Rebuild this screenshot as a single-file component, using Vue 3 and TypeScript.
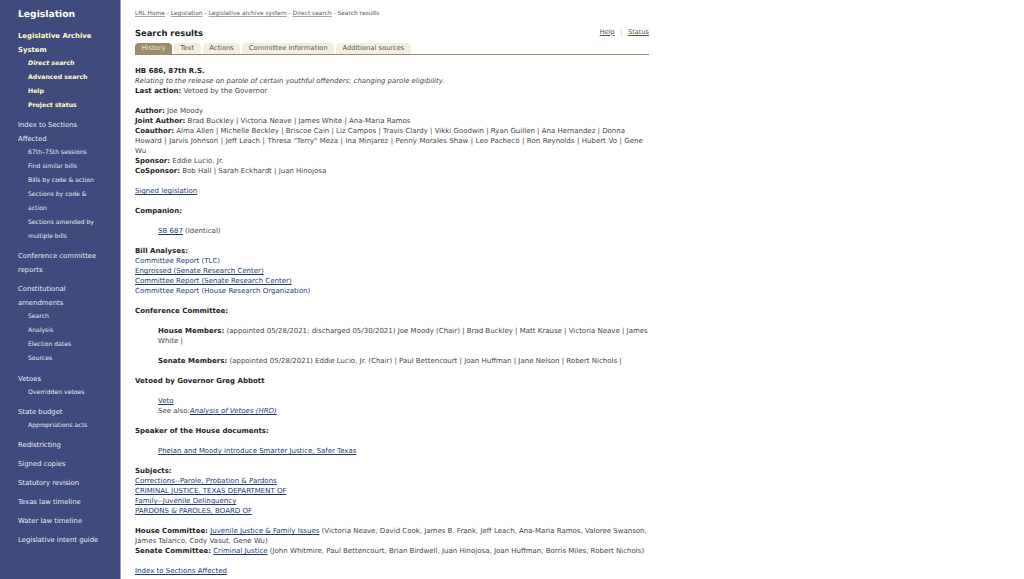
<script setup lang="ts">
interface NavLink { label: string; cls?: string }
interface NavGroup { title: string; items?: NavLink[] }

const groups: NavGroup[] = [
  { title: 'Index to Sections Affected', items: [
    { label: '67th–75th sessions' }, { label: 'Find similar bills' }, { label: 'Bills by code & action' },
    { label: 'Sections by code & action' }, { label: 'Sections amended by multiple bills' } ] },
  { title: 'Conference committee reports' },
  { title: 'Constitutional amendments', items: [
    { label: 'Search' }, { label: 'Analysis' }, { label: 'Election dates' }, { label: 'Sources' } ] },
  { title: 'Vetoes', items: [{ label: 'Overridden vetoes' }] },
  { title: 'State budget', items: [{ label: 'Appropriations acts' }] },
  { title: 'Redistricting' },
  { title: 'Signed copies' },
  { title: 'Statutory revision' },
  { title: 'Texas law timeline' },
  { title: 'Water law timeline' },
  { title: 'Legislative intent guide' },
]
const tabs: string[] = ['History', 'Text', 'Actions', 'Committee information', 'Additional sources']
const analyses: string[] = [
  'Committee Report (TLC)', 'Engrossed (Senate Research Center)',
  'Committee Report (Senate Research Center)', 'Committee Report (House Research Organization)',
]
const subjects: string[] = [
  'Corrections--Parole, Probation & Pardons', 'CRIMINAL JUSTICE, TEXAS DEPARTMENT OF',
  'Family--Juvenile Delinquency', 'PARDONS & PAROLES, BOARD OF',
]
</script>

<template>
  <div class="page">
    <nav class="side">
      <h2 class="brand">Legislation</h2>
      <div class="group archive">
        <a class="title">Legislative Archive System</a>
        <a class="sub em">Direct search</a>
        <a class="sub">Advanced search</a>
        <a class="sub">Help</a>
        <a class="sub">Project status</a>
      </div>
      <div v-for="g in groups" :key="g.title" class="group">
        <a class="title">{{ g.title }}</a>
        <a v-for="i in g.items" :key="i.label" class="sub">{{ i.label }}</a>
      </div>
    </nav>

    <main class="main">
      <div class="crumbs">
        <a>LRL Home</a> - <a>Legislation</a> - <a>Legislative archive system</a> - <a>Direct search</a> - Search results
      </div>
      <div class="head">
        <h1>Search results</h1>
        <div class="help"><a>Help</a><span class="sep">|</span><a>Status</a></div>
      </div>
      <div class="tabs">
        <span v-for="(t, i) in tabs" :key="t" class="tab" :class="{ active: i === 0 }">{{ t }}</span>
      </div>

      <section class="body">
        <p><b>HB 686, 87th R.S.</b><br>
          <i class="desc">Relating to the release on parole of certain youthful offenders; changing parole eligibility.</i><br>
          <b>Last action:</b> Vetoed by the Governor</p>
        <p><b>Author:</b> Joe Moody<br>
          <b>Joint Author:</b> Brad Buckley | Victoria Neave | James White | Ana-Maria Ramos<br>
          <b>Coauthor:</b> Alma Allen | Michelle Beckley | Briscoe Cain | Liz Campos | Travis Clardy | Vikki Goodwin | Ryan Guillen | Ana Hernandez | Donna<br>
          <span class="wide">Howard | Jarvis Johnson | Jeff Leach | Thresa "Terry" Meza | Ina Minjarez | Penny Morales Shaw | Leo Pacheco | Ron Reynolds | Hubert Vo | Gene</span><br>
          Wu<br>
          <b>Sponsor:</b> Eddie Lucio, Jr.<br>
          <b>CoSponsor:</b> Bob Hall | Sarah Eckhardt | Juan Hinojosa</p>
        <p><a>Signed legislation</a></p>
        <p><b>Companion:</b></p>
        <p class="indent"><a>SB 687</a> (Identical)</p>
        <p><b>Bill Analyses:</b><br>
          <template v-for="(a, i) in analyses" :key="a"><a :class="{ plain: i === 0 || i === 3 }">{{ a }}</a><br></template></p>
        <p><b>Conference Committee:</b></p>
        <p class="indent"><b>House Members:</b> (appointed 05/28/2021; discharged 05/30/2021) Joe Moody (Chair) | Brad Buckley | Matt Krause | Victoria Neave | James White |</p>
        <p class="indent"><b>Senate Members:</b> (appointed 05/28/2021) Eddie Lucio, Jr. (Chair) | Paul Bettencourt | Joan Huffman | Jane Nelson | Robert Nichols |</p>
        <p><b>Vetoed by Governor Greg Abbott</b></p>
        <p class="indent"><a>Veto</a><br>See also:<a><i>Analysis of Vetoes (HRO)</i></a></p>
        <p><b>Speaker of the House documents:</b></p>
        <p class="indent"><a class="phelan">Phelan and Moody introduce Smarter Justice, Safer Texas</a></p>
        <p><b>Subjects:</b><br>
          <template v-for="s in subjects" :key="s"><a>{{ s }}</a><br></template></p>
        <p><b>House Committee:</b> <a>Juvenile Justice &amp; Family Issues</a> (Victoria Neave, David Cook, James B. Frank, Jeff Leach, Ana-Maria Ramos, Valoree Swanson, James Talarico, Cody Vasut, Gene Wu)<br>
          <b>Senate Committee:</b> <a>Criminal Justice</a> (John Whitmire, Paul Bettencourt, Brian Birdwell, Juan Hinojosa, Joan Huffman, Borris Miles, Robert Nichols)</p>
        <p><a>Index to Sections Affected</a></p>
      </section>
    </main>
  </div>
</template>

<style scoped>
.page {
  display: flex;
  height: 579px;
  overflow: hidden;
  background: #fff;
  font-family: "DejaVu Sans", Verdana, sans-serif;
  font-size: 7px;
  line-height: 10px;
  color: #444;
  text-rendering: geometricPrecision;
}
.side {
  flex: none;
  box-sizing: border-box;
  width: 121px;
  padding: 8px 20px 0 18px;
  background: #3f4a7d;
  border-right: 1px solid #a9a58c;
  color: #e9eaf0;
  line-height: 14px;
}
.brand {
  margin: 0 0 8px;
  font-size: 9.2px;
  font-weight: bold;
  line-height: 13px;
  color: #fff;
}
.group { margin-bottom: 5.13px; }
.group a { display: block; }
.title { font-size: 6.85px; }
.sub { padding-left: 10px; font-size: 6.1px; }
.archive a { color: #ffffc8; font-weight: bold; }
.archive .sub { font-size: 6.2px; }
.archive .em { font-style: italic; }
.main {
  flex: none;
  box-sizing: border-box;
  width: 528px;
  padding: 9px 0 0 14px;
}
.crumbs { height: 10px; font-size: 5.9px; color: #555; }
.crumbs a { color: #5c5a4c; text-decoration: underline; text-decoration-color: #a8a698; }
.head {
  display: flex;
  justify-content: space-between;
  align-items: center;
  margin-top: 8px;
  height: 12px;
}
h1 {
  margin: 0;
  font-size: 8.4px;
  font-weight: bold;
  color: #222;
  line-height: 12px;
}
.help { font-size: 6.6px; margin-top: -3px; }
.help a { color: #5a5032; text-decoration: underline; }
.sep { margin: 0 5.5px; color: #bbb; }
.tabs {
  display: flex;
  gap: 2px;
  margin-top: 4px;
  height: 11px;
  border-bottom: 1px solid #9b8c6c;
}
.tab {
  padding: 0 6.5px;
  font-size: 6.75px;
  line-height: 11px;
  background: #f3efdf;
  border-radius: 4px 4px 0 0;
  color: #555;
}
.tab.active { background: #9b8c6c; color: #e6e0cc; }
.body { padding-top: 11px; }
.body p { margin: 0 0 10px; }
.body a { color: #1d3a6e; text-decoration: underline; }
.body a.plain { text-decoration: none; }
.body b { color: #222; }
.desc { font-size: 6.9px; }
.wide { word-spacing: 0.3px; }
.phelan { font-size: 6.95px; }
.indent { padding-left: 23px; }
</style>

<style>
html, body { margin: 0; background: #fff; overflow: hidden; }
</style>
